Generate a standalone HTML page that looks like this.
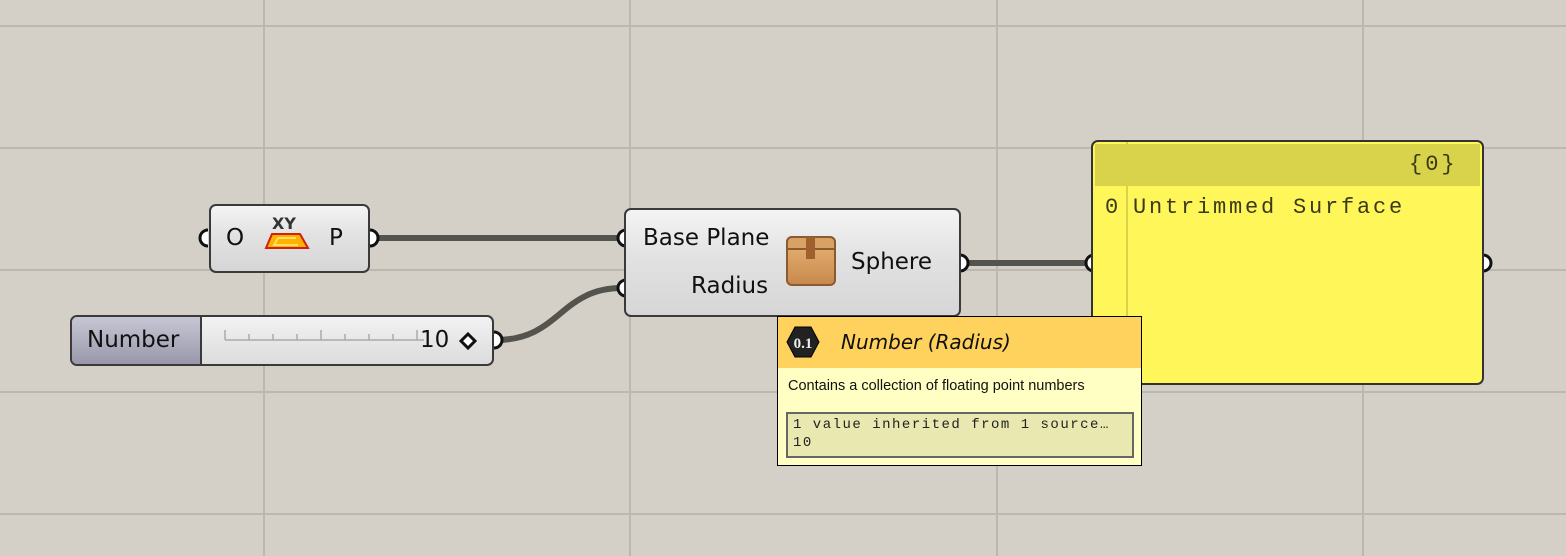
<!DOCTYPE html>
<html><head><meta charset="utf-8"><style>
body{margin:0;width:1566px;height:556px;overflow:hidden;background:#d4d0c8;font-family:"DejaVu Sans","Liberation Sans",sans-serif;position:relative}
.a{position:absolute}
.node{position:absolute;border:2px solid #3a3a3a;border-radius:7px;background:linear-gradient(#f4f4f4,#e2e2e2 45%,#d6d6d6);box-sizing:border-box}
.t{position:absolute;font-size:23px;color:#111;white-space:nowrap}
.mono{font-family:"Liberation Mono",monospace;white-space:nowrap}
</style></head><body>
<svg class="a" style="left:0;top:0" width="1566" height="556">
<g stroke="#bcb8b0" stroke-width="2">
<line x1="264" y1="0" x2="264" y2="556"/><line x1="630" y1="0" x2="630" y2="556"/><line x1="997" y1="0" x2="997" y2="556"/><line x1="1363" y1="0" x2="1363" y2="556"/>
<line x1="0" y1="26" x2="1566" y2="26"/><line x1="0" y1="148" x2="1566" y2="148"/><line x1="0" y1="270" x2="1566" y2="270"/><line x1="0" y1="392" x2="1566" y2="392"/><line x1="0" y1="514" x2="1566" y2="514"/>
</g>
<g stroke="#55534d" stroke-width="6" fill="none">
<line x1="372" y1="238" x2="622" y2="238"/>
<path d="M496 340 C560 340 560 288 622 288"/>
<line x1="962" y1="263" x2="1090" y2="263"/>
</g>
<g fill="#fff" stroke="#111" stroke-width="3">
<path d="M208 230 a8 8 0 0 0 0 16"/><path d="M370 230 a8 8 0 0 1 0 16"/>
<path d="M626 230 a8 8 0 0 0 0 16"/><path d="M626 280 a8 8 0 0 0 0 16"/>
<path d="M960 255 a8 8 0 0 1 0 16"/><path d="M494 332 a8 8 0 0 1 0 16"/>
<path d="M1094 255 a8 8 0 0 0 0 16"/><path d="M1483 255 a8 8 0 0 1 0 16"/>
</g>
</svg>

<div class="node" style="left:209px;top:204px;width:161px;height:69px"></div>
<div class="t" style="left:226px;top:225px">O</div>
<div class="t" style="left:329px;top:225px">P</div>
<div class="a" style="left:272px;top:214px;font-size:16px;font-weight:bold;color:#333">XY</div>
<svg class="a" style="left:264px;top:232px" width="48" height="20"><polygon points="8,2 36,2 44,16 2,16" fill="#ffb000" stroke="#d02010" stroke-width="2"/><path d="M14 6 H32 M14 6 L10 13 H34" stroke="#ffe060" stroke-width="2" fill="none"/></svg>

<div class="node" style="left:624px;top:208px;width:337px;height:109px"></div>
<div class="t" style="left:643px;top:225px">Base Plane</div>
<div class="t" style="left:691px;top:273px">Radius</div>
<div class="t" style="left:851px;top:249px">Sphere</div>
<div class="a" style="left:786px;top:236px;width:50px;height:50px;border-radius:6px;background:linear-gradient(#e8b478,#c88a4c);border:2px solid #8a5a30;box-sizing:border-box"></div>
<div class="a" style="left:786px;top:236px;width:50px;height:14px;border-radius:6px 6px 0 0;background:#d9a264;border:2px solid #8a5a30;box-sizing:border-box"></div>
<div class="a" style="left:806px;top:237px;width:9px;height:22px;background:#a0602e"></div>

<div class="node" style="left:70px;top:315px;width:424px;height:51px;background:linear-gradient(#f2f2f2,#dcdcdc)"></div>
<div class="a" style="left:72px;top:317px;width:128px;height:47px;border-radius:5px 0 0 5px;background:linear-gradient(#c6c6d4,#9898aa);border-right:2px solid #3a3a3a"></div>
<div class="t" style="left:87px;top:327px">Number</div>
<svg class="a" style="left:224px;top:326px" width="210" height="20"><g stroke="#aaa" stroke-width="1.5"><line x1="1" y1="14" x2="200" y2="14"/><line x1="1" y1="4" x2="1" y2="14"/><line x1="25" y1="8" x2="25" y2="14"/><line x1="49" y1="8" x2="49" y2="14"/><line x1="73" y1="8" x2="73" y2="14"/><line x1="97" y1="4" x2="97" y2="14"/><line x1="121" y1="8" x2="121" y2="14"/><line x1="145" y1="8" x2="145" y2="14"/><line x1="169" y1="8" x2="169" y2="14"/><line x1="193" y1="4" x2="193" y2="14"/></g></svg>
<div class="t" style="left:420px;top:327px">10</div>
<svg class="a" style="left:459px;top:332px" width="18" height="18"><polygon points="9,2 16,9 9,16 2,9" fill="#fff" stroke="#111" stroke-width="3"/></svg>

<div class="a" style="left:1091px;top:140px;width:393px;height:245px;border:2px solid #333;border-radius:7px;background:#fff75a;box-sizing:border-box;overflow:hidden">
<div class="a" style="left:2px;top:2px;right:2px;height:42px;background:#d8d34b"></div>
<div class="a" style="left:33px;top:0;width:2px;height:100%;background:#d8d34b"></div>
<div class="a mono" style="left:316px;top:10px;font-size:22px;letter-spacing:3px;color:#3a3a1a">{0}</div>
<div class="a mono" style="left:12px;top:53px;font-size:22px;color:#3a3a1a">0</div>
<div class="a mono" style="left:40px;top:53px;font-size:22px;letter-spacing:2.8px;color:#3a3a1a">Untrimmed Surface</div>
</div>

<div class="a" style="left:777px;top:316px;width:365px;height:150px;border:1px solid #000;background:#ffffc4;box-sizing:border-box">
<div class="a" style="left:0;top:0;right:0;height:51px;background:#ffd25e"></div>
<svg class="a" style="left:8px;top:8px" width="34" height="34"><polygon points="9,2 25,2 33,17 25,32 9,32 1,17" fill="#222" stroke="#000"/><text x="17" y="23" font-family="Liberation Serif,serif" font-size="15" font-weight="bold" fill="#eee" text-anchor="middle">0.1</text></svg>
<div class="a" style="left:63px;top:13px;font-size:20px;font-style:italic;color:#111">Number (Radius)</div>
<div class="a" style="left:10px;top:61px;font-family:'Liberation Sans',sans-serif;font-size:14.5px;color:#111">Contains a collection of floating point numbers</div>
<div class="a mono" style="left:8px;top:95px;width:348px;height:46px;background:#e8e8b0;border:2px solid #666;box-sizing:border-box;font-size:14px;letter-spacing:1.5px;color:#222;padding:2px 5px;line-height:18px">1 value inherited from 1 source…<br>10</div>
</div>
</body></html>
